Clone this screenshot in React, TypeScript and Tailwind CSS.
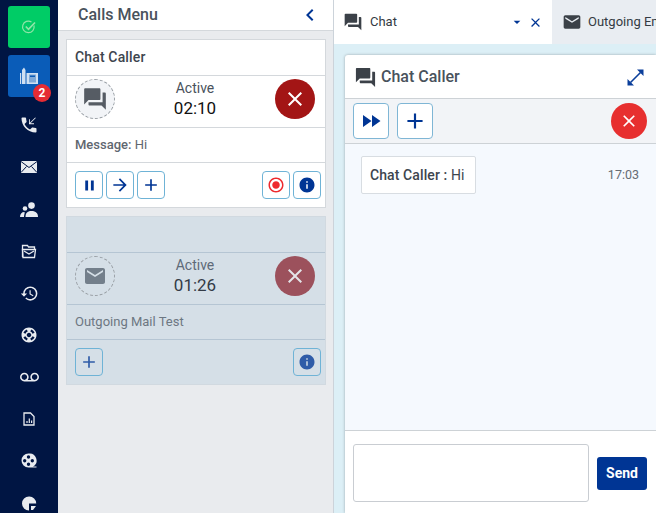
import React from "react";
import {
  MdForum, MdEmail, MdClose, MdAdd, MdPause, MdArrowForward, MdRadioButtonChecked, MdInfo, MdFastForward,
  MdChevronLeft, MdArrowDropDown, MdPhoneCallback, MdHistory, MdVoicemail, MdOutlineSupport,
} from "react-icons/md";

const font = "font-['Roboto',sans-serif]";

function SquareBtn({ children, faded }: { children: React.ReactNode; faded?: boolean }) {
  return (
    <div className="w-[28px] h-[28px] rounded-[4px] border border-[#6fb3d6] bg-white flex items-center justify-center text-[#003594]" style={faded ? { background: "transparent", color: "#2f5ca8" } : undefined}>
      {children}
    </div>
  );
}

function Avatar({ children, faded }: { children: React.ReactNode; faded?: boolean }) {
  return (
    <div className={`w-[40px] h-[40px] rounded-full border border-dashed border-[#9aa0a6] flex items-center justify-center ${faded ? "" : "bg-[#f2f4f7]"}`}>
      {children}
    </div>
  );
}

function SideIcon({ children }: { children: React.ReactNode }) {
  return <div className="h-[42px] shrink-0 flex items-center justify-center text-[#e8ebf0]">{children}</div>;
}

function Hangup({ bg, text }: { bg: string; text: string }) {
  return (
    <div className={`w-[40px] h-[40px] rounded-full flex items-center justify-center ${bg} ${text}`}>
      <MdClose size={24} />
    </div>
  );
}

export default function App() {
  return (
    <div className={`w-[656px] h-[513px] overflow-hidden flex ${font} bg-white`}>
      {/* Sidebar */}
      <div className="w-[58px] h-full shrink-0 overflow-hidden bg-[#001543] flex flex-col items-center pt-[6px]">
        <div className="w-[42px] h-[42px] shrink-0 rounded-[3px] bg-[#00cc66] flex items-center justify-center">
          <svg width="16" height="16" viewBox="0 0 16 16" fill="none" stroke="#8fe5a8" strokeWidth="1.2">
            <path d="M13 6.500A5.800 5.800 0 1 1 10.500 3" />
            <path d="M4.800 7.500l2.700 2.800L14 3.500" strokeWidth="1.700" />
          </svg>
        </div>
        <div className="relative w-[42px] h-[42px] shrink-0 mt-[7px] rounded-[3px] bg-[#0a5cb8] flex items-center justify-center">
          <svg width="18" height="18" viewBox="0 0 18 18" fill="#cfe0f2">
            <path d="M0 17V6h1.200v11zM2 17V3l2-2.500L5.500 3v14z" />
            <path d="M6.500 6H18v11H6.500z" />
            <rect x="9" y="7.500" width="7" height="8" fill="#7ea9d8" />
            <rect x="10" y="8.500" width="5" height="1.500" fill="#0a5cb8" />
          </svg>
          <div className="absolute left-[25px] top-[29px] w-[18px] h-[18px] rounded-full bg-[#e52c34] text-white text-[12px] font-bold flex items-center justify-center">2</div>
        </div>
        <div className="h-[7px] shrink-0" />
        <SideIcon><MdPhoneCallback size={20} /></SideIcon>
        <SideIcon>
          <svg width="16" height="12" viewBox="0 0 16 12">
            <rect width="16" height="12" fill="currentColor" />
            <path d="M0 .5l8 6 8-6M0 11.500l5.500-6M16 11.500l-5.500-6" fill="none" stroke="#001543" strokeWidth="1" />
          </svg>
        </SideIcon>
        <SideIcon>
          <svg width="18" height="15" viewBox="0 0 18 15" fill="currentColor">
            <circle cx="11.500" cy="3.600" r="3.300" />
            <path d="M5.500 15c0-3.500 1.500-6 6-6s6.500 2.500 6.500 6z" />
            <circle cx="5" cy="6.500" r="2.300" />
            <path d="M0 15c0-3 1.500-5 4.500-5 .6 1 -.5 2.500 -.5 5z" />
          </svg>
        </SideIcon>
        <SideIcon>
          <svg width="16" height="16" viewBox="0 0 16 16" fill="none" stroke="currentColor" strokeWidth="1.300">
            <path d="M1.500 14V2.500h5l1 1.500h6v2" />
            <path d="M1.500 6.500h13l-1 8h-11.500z" />
            <path d="M3 8l5 3 5-3" />
          </svg>
        </SideIcon>
        <SideIcon><MdHistory size={19} /></SideIcon>
        <SideIcon><MdOutlineSupport size={18} /></SideIcon>
        <SideIcon><MdVoicemail size={19} /></SideIcon>
        <SideIcon>
          <svg width="12" height="14" viewBox="0 0 12 14" fill="none" stroke="currentColor" strokeWidth="1.300">
            <path d="M1 1h6.500L11 4.500V13H1z" />
            <path d="M4 11V9M6.300 11V6.500M8.600 11V8.500" strokeWidth="1.200" />
          </svg>
        </SideIcon>
        <SideIcon>
          <svg width="16" height="16" viewBox="0 0 16 16" fill="currentColor">
            <path fillRule="evenodd" d="M7.500 .5a7 7 0 1 0 0 14h8v-1h-3.500a7 7 0 0 0-4.500-13zM7.500 2.300a1.700 1.700 0 1 1 0 3.400 1.700 1.700 0 0 1 0-3.400zM3.700 6a1.700 1.700 0 1 1 0 3.400 1.700 1.700 0 0 1 0-3.400zM11.300 6a1.700 1.700 0 1 1 0 3.400 1.700 1.700 0 0 1 0-3.400zM7.500 9.500a1.700 1.700 0 1 1 0 3.400 1.700 1.700 0 0 1 0-3.400z" />
          </svg>
        </SideIcon>
        <SideIcon>
          <svg width="15" height="15" viewBox="0 0 15 15" fill="currentColor">
            <path d="M7 .5A6.800 6.800 0 1 0 7 14.500V7.500h7.200A6.900 6.900 0 0 0 7 .5z" />
            <path d="M9 10h5l-3 4H9z" />
          </svg>
        </SideIcon>
      </div>

      {/* Calls menu */}
      <div className="w-[276px] h-full shrink-0 bg-[#e9ebee] border-r border-[#ccd3da] flex flex-col">
        <div className="h-[31px] shrink-0 bg-white border-b border-[#d4d8dc] flex items-center justify-between pl-[20px] pr-[11px]">
          <span className="text-[16px] font-medium text-[#49525c] leading-none -mt-[1px]">Calls Menu</span>
          <MdChevronLeft size={24} className="text-[#003594]" />
        </div>
        <div className="pl-[8px] pr-[7px] pt-[8px] flex flex-col gap-[8px]">
          <div className="h-[169px] bg-white border border-[#d4d8dc] flex flex-col">
            <div className="h-[36px] shrink-0 border-b border-[#d4d8dc] flex items-center px-[8px] text-[14px] font-medium tracking-[0.15px] text-[#3d454e]">Chat Caller</div>
            <div className="h-[52px] shrink-0 border-b border-[#d4d8dc] flex items-start justify-between pl-[8px] pr-[10px] pt-[3px]">
              <Avatar><MdForum size={26} className="text-[#565c64]" /></Avatar>
              <div className="flex flex-col items-center mt-[-1px]">
                <span className="text-[14px] leading-[20px] text-[#49525c]">Active</span>
                <span className="text-[17px] leading-[20px] text-[#111]">02:10</span>
              </div>
              <Hangup bg="bg-[#a31515]" text="text-white" />
            </div>
            <div className="h-[35px] shrink-0 border-b border-[#d4d8dc] flex items-center px-[8px] text-[13px] text-[#5f6770]">
              <span className="font-medium">Message:</span>&nbsp;Hi
            </div>
            <div className="flex-1 flex items-center justify-between pl-[8px] pr-[4px]">
              <div className="flex gap-[3px]">
                <SquareBtn><MdPause size={17} /></SquareBtn>
                <SquareBtn><MdArrowForward size={20} /></SquareBtn>
                <SquareBtn><MdAdd size={20} /></SquareBtn>
              </div>
              <div className="flex gap-[3px]">
                <SquareBtn><MdRadioButtonChecked size={18} className="text-[#ee2a2e]" /></SquareBtn>
                <SquareBtn><MdInfo size={18} /></SquareBtn>
              </div>
            </div>
          </div>

          <div className="h-[169px] bg-[#d5dfe7] border border-[#d1d9e0] flex flex-col">
            <div className="h-[36px] shrink-0 border-b border-[#b5c5d3]" />
            <div className="h-[52px] shrink-0 border-b border-[#b5c5d3] flex items-start justify-between pl-[8px] pr-[10px] pt-[3px]">
              <Avatar faded><MdEmail size={24} className="text-[#737f8b]" /></Avatar>
              <div className="flex flex-col items-center mt-[-1px]">
                <span className="text-[14px] leading-[20px] text-[#5e6a78]">Active</span>
                <span className="text-[17px] leading-[20px] text-[#333b46]">01:26</span>
              </div>
              <Hangup bg="bg-[#9c515c]" text="text-[#e4e4e8]" />
            </div>
            <div className="h-[35px] shrink-0 border-b border-[#b5c5d3] flex items-center px-[8px] text-[13px] text-[#6d7782]">Outgoing Mail Test</div>
            <div className="flex-1 flex items-center justify-between pl-[8px] pr-[4px]">
              <SquareBtn faded><MdAdd size={20} /></SquareBtn>
              <SquareBtn faded><MdInfo size={18} /></SquareBtn>
            </div>
          </div>
        </div>
      </div>

      {/* Right */}
      <div className="flex-1 min-w-0 h-full flex flex-col bg-[#dceff6]">
        <div className="h-[44px] shrink-0 flex overflow-hidden">
          <div className="w-[218px] shrink-0 bg-white flex items-center pl-[9px] pr-[9px]">
            <MdForum size={20} className="text-[#3b4148]" />
            <span className="ml-[7px] text-[13px] text-[#343b43]">Chat</span>
            <MdArrowDropDown size={16} className="ml-auto text-[#003594]" />
            <MdClose size={15} className="ml-[3px] text-[#003594]" />
          </div>
          <div className="flex-1 bg-[#e9edf2] flex items-center pl-[10px] whitespace-nowrap">
            <MdEmail size={20} className="text-[#3b4148] shrink-0" />
            <span className="ml-[6px] text-[13px] text-[#343b43]">Outgoing Email</span>
          </div>
        </div>
        <div className="flex-1 min-h-0 pl-[11px] pt-[11px]">
          <div className="h-full bg-white rounded-tl-[3px] shadow-[0_0_3px_rgba(0,0,0,0.3)] flex flex-col">
            <div className="h-[44px] shrink-0 border-b border-[#cdd2d6] flex items-center justify-between pl-[9px] pr-[12px] pt-[1px]">
              <div className="flex items-center">
                <MdForum size={23} className="text-[#3b4148]" />
                <span className="ml-[4px] text-[16px] font-medium text-[#49525c]">Chat Caller</span>
              </div>
              <svg width="17" height="17" viewBox="0 0 17 17" fill="none" stroke="#0b3f9b">
                <path d="M3.500 13.500L13.500 3.500" strokeWidth="1.600" />
                <path d="M10 .5h6.500V7zM.5 10v6.500H7z" fill="#0b3f9b" strokeWidth="0" />
              </svg>
            </div>
            <div className="h-[45px] shrink-0 border-b border-[#cdd2d6] bg-[#f2f4f7] flex items-center justify-between pl-[8px] pr-[9px]">
              <div className="flex gap-[8px]">
                <div className="w-[36px] h-[36px] rounded-[4px] border border-[#7fb6d5] bg-white flex items-center justify-center text-[#003594]"><MdFastForward size={24} /></div>
                <div className="w-[36px] h-[36px] rounded-[4px] border border-[#7fb6d5] bg-white flex items-center justify-center text-[#003594]"><MdAdd size={26} /></div>
              </div>
              <div className="w-[36px] h-[36px] rounded-full bg-[#e72f2f] flex items-center justify-center text-white"><MdClose size={20} /></div>
            </div>
            <div className="flex-1 min-h-0 bg-[#f5f9fe] border-b border-[#cdd2d6] pl-[16px] pr-[17px] pt-[12px]">
              <div className="flex items-center justify-between">
                <div className="h-[38px] pl-[8px] pr-[10px] bg-white border border-[#d8dde2] rounded-[2px] flex items-center text-[14px] tracking-[0.1px] text-[#3d454e]">
                  <span className="font-medium">Chat Caller :</span>&nbsp;Hi
                </div>
                <span className="text-[12.5px] text-[#656c74]">17:03</span>
              </div>
            </div>
            <div className="h-[82px] shrink-0 flex items-start pl-[8px] pr-[9px] pt-[13px]">
              <div className="w-[236px] h-[58px] bg-white border border-[#c9cdd2] rounded-[3px]" />
              <div className="ml-[8px] mt-[13px] w-[50px] h-[33px] rounded-[3px] bg-[#003594] text-white text-[14px] font-bold flex items-center justify-center">Send</div>
            </div>
          </div>
        </div>
      </div>
    </div>
  );
}
